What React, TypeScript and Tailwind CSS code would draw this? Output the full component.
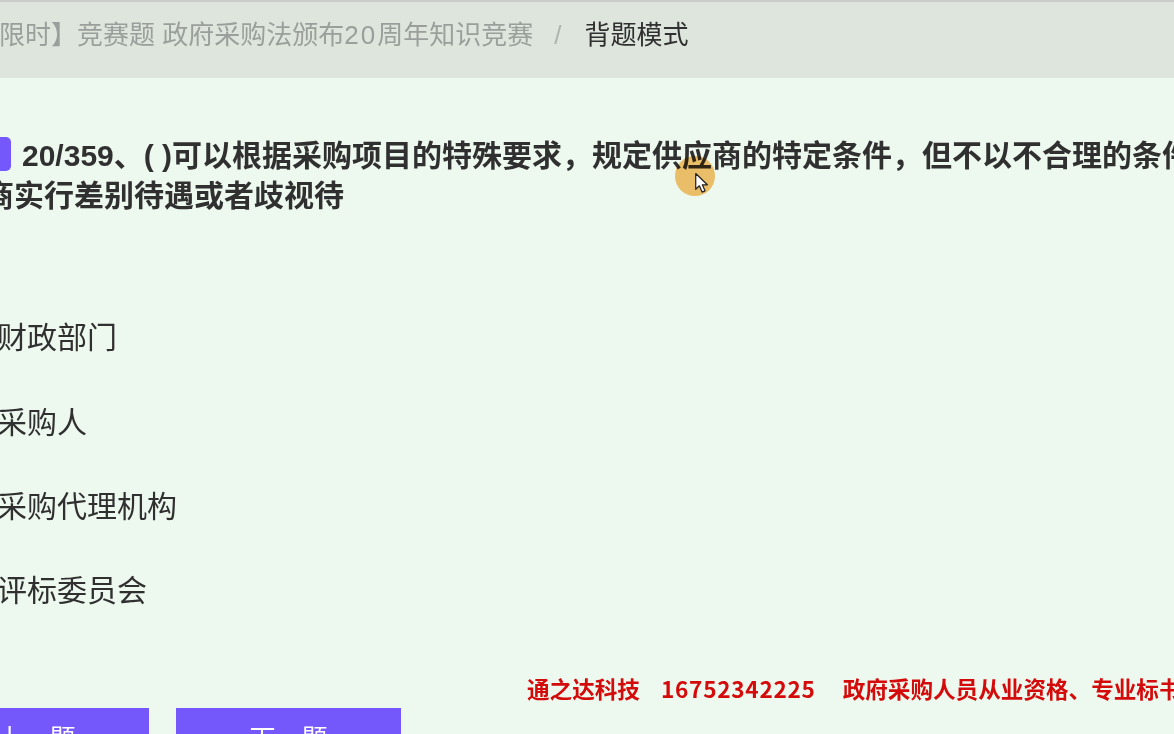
const options = ['财政部门', '采购人', '采购代理机构', '评标委员会'];

export default function App() {
  return (
    <div className="relative h-[734px] w-[1174px] overflow-hidden bg-[#edf8ee] font-['Liberation_Sans','Noto_Sans_CJK_SC',sans-serif] text-[#303030]">
      <div className="-ml-[76px] w-[1500px]">
        <header className="flex h-[78px] items-center whitespace-nowrap border-t-2 border-[#c9ccc9] bg-[#dde5dd] pb-[9px] pl-[49px] text-[26px]">
          <span className="text-[#9b9f9b]">
            【限时】竞赛题 政府采购法颁布<span className="tracking-[2px]">20</span>周年知识竞赛
          </span>
          <span className="ml-[21px] mr-[23px] text-[#b0b4b0]">/</span>
          <span className="text-[#303030]">背题模式</span>
        </header>

        <section className="pt-[58px]">
          <div className="flex h-10 items-center whitespace-nowrap pl-[35px] text-[30px] font-bold leading-10">
            <span className="mb-[5px] mr-[11px] flex h-[34px] w-[52px] items-center justify-end rounded-[5px] bg-[#7558fb] pr-[13px] text-[18px] font-normal text-[#9d8bfc]">
              单选题
            </span>
            <span>20/359、( )可以根据采购项目的特殊要求，规定供应商的特定条件，但不以不合理的条件对供应</span>
          </div>
          <div className="whitespace-nowrap pl-[60px] text-[30px] font-bold leading-10">商实行差别待遇或者歧视待</div>
        </section>

        <ul className="mt-[101.3px] flex flex-col gap-[42.4px] pl-[73px] text-[30px] leading-[42px]">
          {options.map((o) => (
            <li key={o}>{o}</li>
          ))}
        </ul>

        <p className="ml-[603px] mt-[61px] whitespace-nowrap font-['Noto_Sans_CJK_SC',sans-serif] text-[22.6px] font-bold leading-8 text-[#d40b0b]">
          通之达科技
          <span className="ml-[21px] tracking-[0.73px]">16752342225</span>
          <span className="ml-[27px]">政府采购人员从业资格、专业标书制作培训</span>
        </p>

        <div className="mt-[3px] flex gap-[27px] text-[26px] leading-[26px] text-white">
          <button className="h-[62px] w-[225px] bg-[#7558fb]">上一题</button>
          <button className="h-[62px] w-[225px] bg-[#7558fb]">下一题</button>
        </div>
      </div>

      <div className="absolute left-[675px] top-[156px] h-10 w-10 rounded-full bg-[#fcc46f] mix-blend-multiply" />
      <svg className="absolute left-[694px] top-[172px]" width="16" height="22" viewBox="0 0 15 21">
        <path d="M1.5 1.5V16.5L5 13.2L7.6 19.2L10.4 18L7.8 12.2H12.6Z" fill="#fff" stroke="#222" strokeWidth="1.2" strokeLinejoin="round" />
      </svg>
    </div>
  );
}
